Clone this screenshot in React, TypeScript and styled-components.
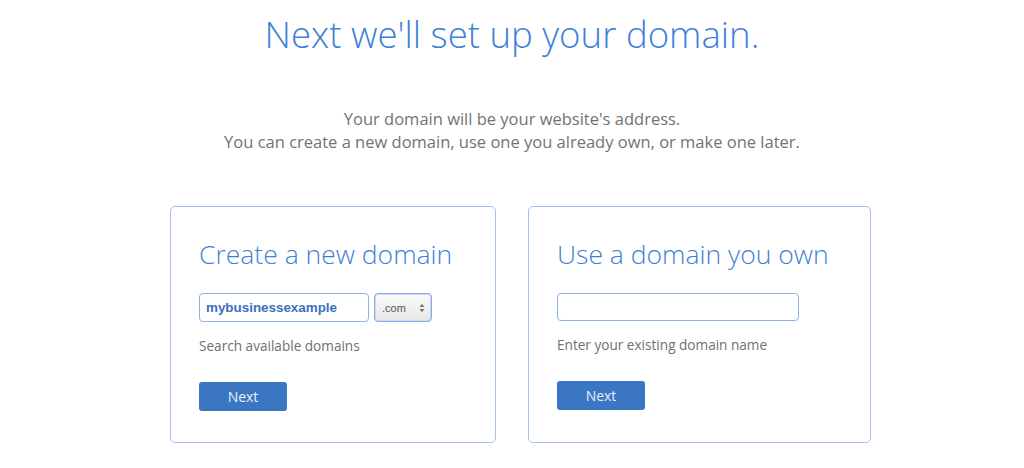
import styled, { createGlobalStyle } from 'styled-components'

const GlobalStyle = createGlobalStyle`
  body {
    margin: 0;
    background: #fff;
    font-family: 'Open Sans', 'Liberation Sans', sans-serif;
  }
`

function SelectArrows() {
  return (
    <svg width="6" height="10" viewBox="0 0 6 10">
      <path d="M0.5 4 L3 0.8 L5.5 4 Z" fill="#777" />
      <path d="M0.5 6 L3 9.2 L5.5 6 Z" fill="#777" />
    </svg>
  )
}

export default function App() {
  return (
    <>
      <GlobalStyle />
      <Page>
        <Heading>Next we'll set up your domain.</Heading>
        <Intro>
          Your domain will be your website's address.
          <br />
          You can create a new domain, use one you already own, or make one later.
        </Intro>
        <Cards>
          <Card $width={326}>
            <CardTitle>Create a new domain</CardTitle>
            <InputRow>
              <TextInput $width={170} defaultValue="mybusinessexample" />
              <Select>
                <span>.com</span>
                <SelectArrows />
              </Select>
            </InputRow>
            <Hint>Search available domains</Hint>
            <NextButton>Next</NextButton>
          </Card>
          <Card $width={343}>
            <CardTitle>Use a domain you own</CardTitle>
            <InputRow>
              <TextInput $width={242} $height={28} defaultValue="" />
            </InputRow>
            <Hint>Enter your existing domain name</Hint>
            <NextButton>Next</NextButton>
          </Card>
        </Cards>
      </Page>
    </>
  )
}

const Page = styled.div`
  display: flex;
  flex-direction: column;
  align-items: center;
  padding-top: 13px;
`

const Heading = styled.h1`
  margin: 0;
  font-size: 36.6px;
  line-height: 42px;
  font-weight: 300;
  color: #3f7fd8;
  text-align: center;
`

const Intro = styled.p`
  margin: 52px 0 0;
  font-size: 16.5px;
  line-height: 23px;
  font-weight: 400;
  color: #737373;
  text-align: center;
`

const Cards = styled.div`
  display: flex;
  gap: 32px;
  margin-top: 53px;
  padding-left: 17px;
`

const Card = styled.div<{ $width: number }>`
  width: ${(p) => p.$width}px;
  box-sizing: border-box;
  height: 237px;
  border: 1.5px solid #a4c0ee;
  border-radius: 5px;
  padding: 31px 28px 0;
  display: flex;
  flex-direction: column;
  align-items: flex-start;
`

const CardTitle = styled.h2`
  margin: 0;
  font-size: 26.5px;
  line-height: 32px;
  font-weight: 300;
  color: #3f7fd8;
  white-space: nowrap;
`

const InputRow = styled.div`
  display: flex;
  gap: 5px;
  margin-top: 23px;
`

const TextInput = styled.input<{ $width: number; $height?: number }>`
  width: ${(p) => p.$width}px;
  height: ${(p) => p.$height ?? 29}px;
  box-sizing: border-box;
  border: 1px solid #8fb1e4;
  border-radius: 4px;
  padding: 0 6px;
  font-family: 'Liberation Sans', Arial, sans-serif;
  font-size: 13.4px;
  font-weight: 700;
  color: #3b6fbe;
  outline: none;
`

const Select = styled.div`
  width: 58px;
  height: 29px;
  box-sizing: border-box;
  border: 1px solid #88ace2;
  border-radius: 4px;
  box-shadow: inset 0 0 0 1px #c9d9f2;
  background: linear-gradient(#fbfbfb, #e6e6e6);
  display: flex;
  align-items: center;
  justify-content: space-between;
  padding: 0 6px 0 7px;
  font-family: 'Liberation Sans', Arial, sans-serif;
  font-size: 11px;
  color: #555;
`

const Hint = styled.div`
  margin-top: 14px;
  font-size: 13.6px;
  line-height: 20px;
  color: #707070;
`

const NextButton = styled.button`
  margin-top: 26px;
  width: 88px;
  height: 29px;
  border: none;
  border-radius: 3px;
  background: #3b76c2;
  color: #e8f0fb;
  font-family: 'Open Sans', 'Liberation Sans', sans-serif;
  font-size: 14px;
  cursor: pointer;
`
